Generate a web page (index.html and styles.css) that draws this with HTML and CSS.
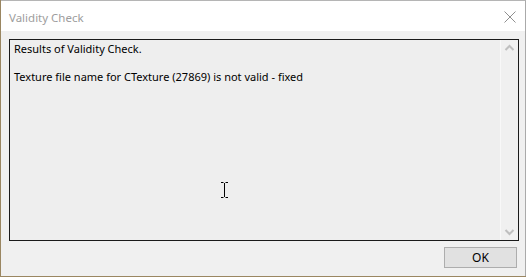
FILE: index.html
```html
<!DOCTYPE html>
<html>
<head>
<meta charset="utf-8">
<link rel="stylesheet" href="styles.css">
</head>
<body>
<div class="window">
  <div class="titlebar">
    <span class="title">Validity Check</span>
    <svg class="close" width="12" height="12" viewBox="0 0 12 12"><path d="M0.5 0.5L11.5 11.5M11.5 0.5L0.5 11.5" stroke="#8f8f8f" stroke-width="1" fill="none"/></svg>
  </div>
  <div class="client">
    <div class="textbox">
      <div class="text">
        <div class="line">Results of Validity Check.</div>
        <div class="line">&nbsp;</div>
        <div class="line">Texture file name for CTexture (27869) is not valid - fixed</div>
      </div>
      <div class="scrollbar">
        <svg width="17" height="17" viewBox="0 0 17 17"><path d="M4.5 10L8.5 6L12.5 10" stroke="#bfbfbf" stroke-width="2" fill="none"/></svg>
        <svg width="17" height="17" viewBox="0 0 17 17"><path d="M4.5 7L8.5 11L12.5 7" stroke="#bfbfbf" stroke-width="2" fill="none"/></svg>
      </div>
    </div>
    <div class="buttons">
      <div class="btn">OK</div>
    </div>
  </div>
  <svg class="ibeam" width="9" height="16" viewBox="0 0 9 16"><path d="M1 0.5H3.5M5.5 0.5H8M4.5 1V15M1 15.5H3.5M5.5 15.5H8" stroke="#000" stroke-width="1" fill="none"/></svg>
</div>
</body>
</html>
```
FILE: styles.css
```css
html, body {
  margin: 0;
  padding: 0;
}
body {
  background: #9a8661;
  width: 526px;
  height: 277px;
  overflow: hidden;
  font-family: "Noto Sans", "Liberation Sans", sans-serif;
}
.window {
  position: relative;
  margin-left: 1px;
  width: 525px;
  height: 276px;
  box-sizing: border-box;
  border-top: 1px solid #b5b5b5;
  border-right: 1px solid #aaaaaa;
  background: #f0f0f0;
  display: flex;
  flex-direction: column;
}
.titlebar {
  height: 30px;
  background: #ffffff;
  display: flex;
  align-items: center;
  justify-content: space-between;
  padding: 0 9px 0 8px;
  flex-shrink: 0;
}
.title {
  font-size: 11.5px;
  color: #9d9d9d;
  position: relative;
  top: 1px;
}
.close {
  display: block;
  margin-top: 2px;
}
.client {
  flex: 1;
  padding: 8px 6px 0 8px;
  display: flex;
  flex-direction: column;
}
.textbox {
  height: 202px;
  box-sizing: border-box;
  border: 1px solid #1a1a1a;
  background: #eeeeee;
  display: flex;
}
.text {
  flex: 1;
  padding: 2px 4px;
  font-size: 11px;
  line-height: 14px;
  color: #000;
}
.scrollbar {
  width: 17px;
  background: #f0f0f0;
  border-left: 1px solid #f8f8f8;
  display: flex;
  flex-direction: column;
  justify-content: space-between;
}
.scrollbar svg {
  display: block;
}
.buttons {
  display: flex;
  justify-content: flex-end;
  padding: 6px 2px 0 0;
}
.btn {
  width: 73px;
  height: 21px;
  box-sizing: border-box;
  border: 1px solid #adadad;
  background: #e1e1e1;
  font-size: 12px;
  color: #000;
  display: flex;
  align-items: center;
  justify-content: center;
}
.ibeam {
  position: absolute;
  left: 219px;
  top: 181px;
}
```
